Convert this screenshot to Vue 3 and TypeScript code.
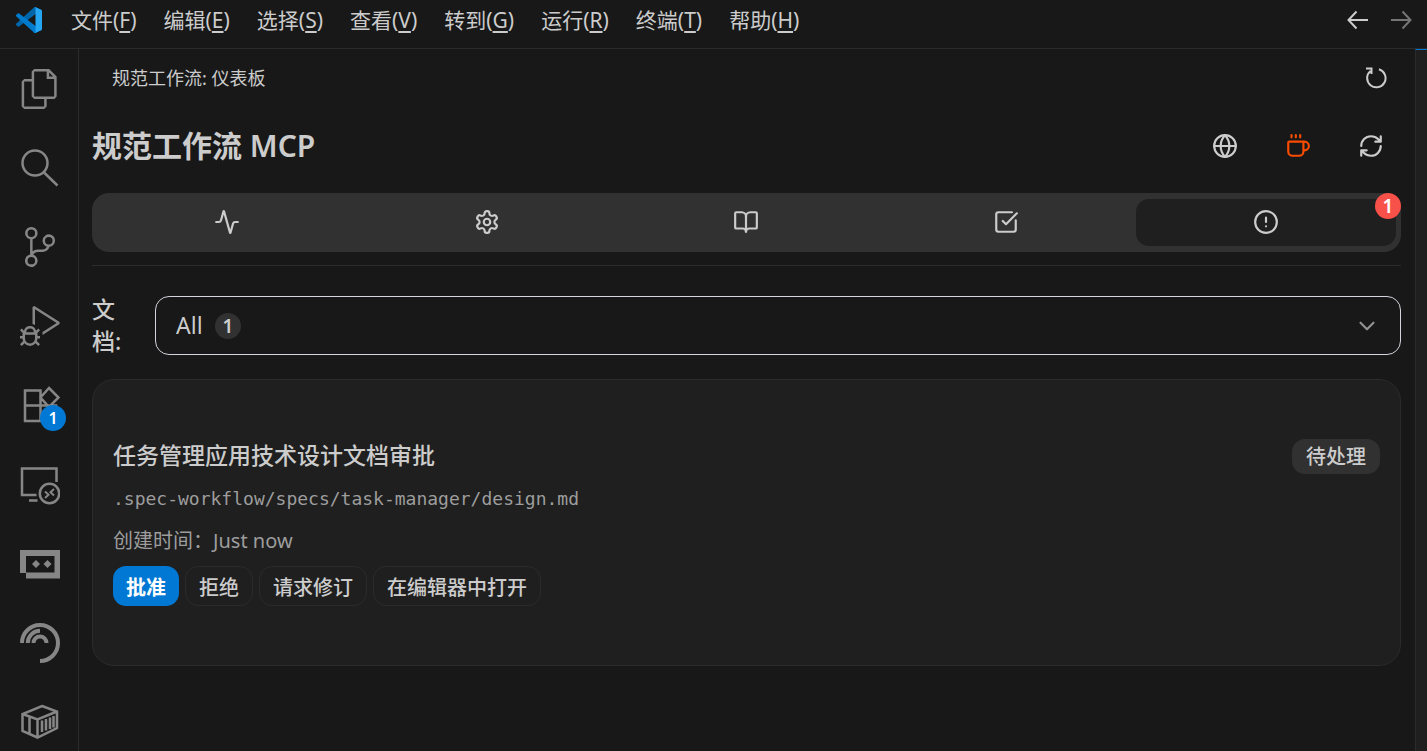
<script setup lang="ts">
import { ref } from 'vue'

interface MenuItem { label: string; key: string }

const menus: MenuItem[] = [
  { label: '文件', key: 'F' },
  { label: '编辑', key: 'E' },
  { label: '选择', key: 'S' },
  { label: '查看', key: 'V' },
  { label: '转到', key: 'G' },
  { label: '运行', key: 'R' },
  { label: '终端', key: 'T' },
  { label: '帮助', key: 'H' },
]

interface Tab { id: string; label: string; paths: string[]; circle?: number; badge?: number }

const tabs: Tab[] = [
  { id: 'overview', label: '概览', paths: ['M22 12h-2.48a2 2 0 0 0-1.93 1.46l-2.35 8.36a.25.25 0 0 1-.48 0L9.24 2.18a.25.25 0 0 0-.48 0l-2.35 8.36A2 2 0 0 1 4.49 12H2'] },
  {
    id: 'steering', label: '指导', circle: 3,
    paths: ['M12.22 2h-.44a2 2 0 0 0-2 2v.18a2 2 0 0 1-1 1.73l-.43.25a2 2 0 0 1-2 0l-.15-.08a2 2 0 0 0-2.73.73l-.22.38a2 2 0 0 0 .73 2.73l.15.1a2 2 0 0 1 1 1.72v.51a2 2 0 0 1-1 1.74l-.15.09a2 2 0 0 0-.73 2.73l.22.38a2 2 0 0 0 2.73.73l.15-.08a2 2 0 0 1 2 0l.43.25a2 2 0 0 1 1 1.73V20a2 2 0 0 0 2 2h.44a2 2 0 0 0 2-2v-.18a2 2 0 0 1 1-1.73l.43-.25a2 2 0 0 1 2 0l.15.08a2 2 0 0 0 2.73-.73l.22-.39a2 2 0 0 0-.73-2.73l-.15-.08a2 2 0 0 1-1-1.74v-.5a2 2 0 0 1 1-1.74l.15-.09a2 2 0 0 0 .73-2.73l-.22-.38a2 2 0 0 0-2.73-.73l-.15.08a2 2 0 0 1-2 0l-.43-.25a2 2 0 0 1-1-1.73V4a2 2 0 0 0-2-2z'],
  },
  { id: 'specs', label: '规范', paths: ['M12 7v14', 'M3 18a1 1 0 0 1-1-1V4a1 1 0 0 1 1-1h5a4 4 0 0 1 4 4 4 4 0 0 1 4-4h5a1 1 0 0 1 1 1v13a1 1 0 0 1-1 1h-6a3 3 0 0 0-3 3 3 3 0 0 0-3-3z'] },
  { id: 'tasks', label: '任务', paths: ['M21 10.5V19a2 2 0 0 1-2 2H5a2 2 0 0 1-2-2V5a2 2 0 0 1 2-2h12.5', 'm9 11 3 3L22 4'] },
  { id: 'approvals', label: '审批', circle: 10, paths: ['M12 8v4', 'M12 16h.01'], badge: 1 },
]

const activeTab = ref('approvals')
const documentFilter = ref('all')
const actions = ['批准', '拒绝', '请求修订', '在编辑器中打开']
</script>

<template>
  <div class="window">
    <header class="titlebar">
      <svg class="logo" viewBox="0 0 100 100" aria-hidden="true">
        <path fill="#0065a9" d="M96.46 10.8 75.86.88a6.25 6.25 0 0 0-7.11 1.2L1.3 63.58a4.17 4.17 0 0 0 0 6.17l5.51 5a4.17 4.17 0 0 0 5.32.24l81.23-61.62A4.14 4.14 0 0 1 100 16.67v-.24a6.25 6.25 0 0 0-3.54-5.63z" />
        <path fill="#007acc" d="M96.46 89.2 75.86 99.12a6.25 6.25 0 0 1-7.11-1.2L1.3 36.42a4.17 4.17 0 0 1 0-6.17l5.51-5a4.17 4.17 0 0 1 5.32-.24l81.23 61.62A4.14 4.14 0 0 0 100 83.33v.24a6.25 6.25 0 0 1-3.54 5.63z" />
        <path fill="#24a6f2" d="M75.86 99.13a6.25 6.25 0 0 1-7.11-1.21C71.06 100.22 75 98.59 75 95.33V4.67c0-3.26-3.94-4.89-6.25-2.59a6.25 6.25 0 0 1 7.11-1.21l20.6 9.91A6.25 6.25 0 0 1 100 16.41v67.18a6.25 6.25 0 0 1-3.54 5.63z" />
      </svg>
      <nav class="menus" aria-label="主菜单">
        <button v-for="menu in menus" :key="menu.key" type="button" class="menu">{{ menu.label }}(<u>{{ menu.key }}</u>)</button>
      </nav>
      <div class="history">
        <button type="button" class="plain" aria-label="后退">
          <svg class="arrow" viewBox="0 0 22 22"><path d="M21 11H1.5M9.5 2.5 1.5 11l8 8.5" /></svg>
        </button>
        <button type="button" class="plain dim" aria-label="前进">
          <svg class="arrow" viewBox="0 0 22 22"><path d="M1 11h19.5M12.5 2.5l8 8.5-8 8.5" /></svg>
        </button>
      </div>
    </header>

    <div class="workbench">
      <nav class="activity" aria-label="活动栏">
        <div class="activity-list">
          <button type="button" class="plain" aria-label="资源管理器">
            <svg class="solid" viewBox="0 0 24 24"><path d="M17.5 0h-9L7 1.5V6H2.5L1 7.5v15.07L2.5 24h12.07L16 22.57V18h4.7l1.3-1.43V4.5L17.5 0zm0 2.12l2.38 2.38H17.5V2.12zm-3 20.38h-12v-15H7v9.07L8.5 18h6v4.5zm6-6h-12v-15H16V6h4.5v10.5z" /></svg>
          </button>
          <button type="button" class="plain" aria-label="搜索">
            <svg class="line" viewBox="0 0 40 40"><circle cx="15" cy="15" r="12.5" /><path d="m24 24.5 13.5 13" /></svg>
          </button>
          <button type="button" class="plain" aria-label="源代码管理">
            <svg class="solid" viewBox="0 0 24 24"><path d="M21.007 8.222A3.738 3.738 0 0 0 15.045 5.2a3.737 3.737 0 0 0 1.156 6.583 2.988 2.988 0 0 1-2.668 1.67h-2.99a4.456 4.456 0 0 0-2.989 1.165V7.4a3.737 3.737 0 1 0-1.494 0v9.117a3.776 3.776 0 1 0 1.816.099 2.99 2.99 0 0 1 2.668-1.667h2.99a4.484 4.484 0 0 0 4.223-3.039 3.736 3.736 0 0 0 3.25-3.687zM4.565 3.738a2.242 2.242 0 1 1 4.484 0 2.242 2.242 0 0 1-4.484 0zm4.484 16.441a2.242 2.242 0 1 1-4.484 0 2.242 2.242 0 0 1 4.484 0zm8.221-9.715a2.242 2.242 0 1 1 0-4.485 2.242 2.242 0 0 1 0 4.485z" /></svg>
          </button>
          <button type="button" class="plain" aria-label="运行和调试">
            <svg class="solid" viewBox="0 0 24 24"><path d="M10.94 13.5l-1.32 1.32a3.73 3.73 0 0 0-7.24 0L1.06 13.5 0 14.56l1.72 1.72-.22.22V18H0v1.5h1.5v.08c.077.489.214.966.41 1.42L0 22.94 1.06 24l1.65-1.65A4.308 4.308 0 0 0 6 24a4.31 4.31 0 0 0 3.29-1.65L10.94 24 12 22.94 10.09 21c.198-.464.336-.951.41-1.45v-.1H12V18h-1.5v-1.5l-.22-.22L12 14.56l-1.06-1.06zM6 13.5a2.25 2.25 0 0 1 2.25 2.25h-4.5A2.25 2.25 0 0 1 6 13.5zm3 6a3.33 3.33 0 0 1-3 3 3.33 3.33 0 0 1-3-3v-2.25h6v2.25zm14.76-9.9v1.26L13.5 17.37V15.6l8.5-5.37L9 2v9.46a5.07 5.07 0 0 0-1.5-.72V.63L8.64 0l15.12 9.6z" /></svg>
          </button>
          <button type="button" class="plain" aria-label="扩展，1 个更新">
            <svg class="line" viewBox="0 0 40 40"><path d="M5 5.5h15.5V36H5zM5 20.5h31V36H20.5M29 3l9.5 9.5L29 22l-8.5-9.5z" /></svg>
            <span class="count">1</span>
          </button>
          <button type="button" class="plain" aria-label="远程资源管理器">
            <svg class="line" viewBox="0 0 40 40"><path d="M36.5 17V3.5H2V30h14.5M9 35.5h8.5" /><circle cx="29.5" cy="28.5" r="9.7" /><path class="fine" d="m25 26.5 3.5 3.3-3.5 3.2M34 24l-3.5 3.2 3.5 3.3" /></svg>
          </button>
          <button type="button" class="plain" aria-label="助手">
            <svg class="solid" viewBox="0 0 40 40"><path fill-rule="evenodd" d="M0 6h40v28.5H6V29H0zm6 6v16.500h28.500V12z" /><path d="m16 16 4 4-4 4-4-4zM27.500 16l4 4-4 4-4-4z" /></svg>
          </button>
          <button type="button" class="plain" aria-label="代码智能">
            <svg class="line thick" viewBox="0 0 40 40"><path d="M2 20A18 18 0 1 1 20 38" /><path d="M7.8 20A12.2 12.2 0 0 1 20 7.8" /><path d="M13.5 20a6.5 6.5 0 0 1 13 0" /></svg>
          </button>
          <button type="button" class="plain" aria-label="容器">
            <svg class="line" viewBox="0 0 40 40"><path d="M22 4 37 9.5v16.5L17.5 35.5 2.5 29V12zM2.5 12l15 5.5L37 9.5M17.5 17.5v18M9.5 15v17M22 18.5v11.5M26 17v11.5M30 15.5V27M33.5 14v11.5" /></svg>
          </button>
        </div>
      </nav>

      <main class="editor">
        <div class="panel-title">
          <span>规范工作流: 仪表板</span>
          <button type="button" class="plain" aria-label="重新加载">
            <svg class="reload" viewBox="0 0 22 22"><path d="M14 2.3A9.2 9.2 0 1 1 5.5 4M1 1.5h5.5V7" /></svg>
          </button>
        </div>

        <div class="content">
          <div class="heading">
            <h1>规范工作流 MCP</h1>
            <div class="tools">
              <button type="button" class="plain" aria-label="语言">
                <svg class="icon" viewBox="0 0 24 24"><circle cx="12" cy="12" r="10" /><path d="M12 2a14.5 14.5 0 0 0 0 20 14.5 14.5 0 0 0 0-20M2 12h20" /></svg>
              </button>
              <button type="button" class="plain coffee" aria-label="支持项目">
                <svg class="icon" viewBox="0 0 24 24"><path d="M6 2v2M10 2v2M14 2v2M16 8a1 1 0 0 1 1 1v8a4 4 0 0 1-4 4H7a4 4 0 0 1-4-4V9a1 1 0 0 1 1-1h14a4 4 0 1 1 0 8h-1" /></svg>
              </button>
              <button type="button" class="plain" aria-label="刷新">
                <svg class="icon" viewBox="0 0 24 24"><path d="M3 12a9 9 0 0 1 9-9 9.75 9.75 0 0 1 6.74 2.74L21 8M21 3v5h-5M21 12a9 9 0 0 1-9 9 9.75 9.75 0 0 1-6.74-2.74L3 16M8 16H3v5" /></svg>
              </button>
            </div>
          </div>

          <div class="tabs" role="tablist">
            <button
              v-for="tab in tabs"
              :key="tab.id"
              type="button"
              role="tab"
              class="tab"
              :class="{ active: tab.id === activeTab }"
              :aria-label="tab.label"
              :aria-selected="tab.id === activeTab"
              @click="activeTab = tab.id"
            >
              <svg class="icon" viewBox="0 0 24 24">
                <path v-for="d in tab.paths" :key="d" :d="d" />
                <circle v-if="tab.circle" cx="12" cy="12" :r="tab.circle" />
              </svg>
              <span v-if="tab.badge" class="alert">{{ tab.badge }}</span>
            </button>
          </div>

          <div class="filter">
            <label for="document-filter">文档:</label>
            <div class="select-box">
              <select id="document-filter" v-model="documentFilter">
                <option value="all">All</option>
              </select>
              <span class="total">1</span>
              <svg class="chevron" viewBox="0 0 24 24" aria-hidden="true"><path d="m6 9 6 6 6-6" /></svg>
            </div>
          </div>

          <article class="card">
            <div class="card-head">
              <h2>任务管理应用技术设计文档审批</h2>
              <span class="status">待处理</span>
            </div>
            <p class="path">.spec-workflow/specs/task-manager/design.md</p>
            <p class="created">创建时间：Just now</p>
            <div class="actions">
              <button v-for="(action, i) in actions" :key="action" type="button" class="action" :class="{ primary: i === 0 }">{{ action }}</button>
            </div>
          </article>
        </div>
      </main>
      <aside class="side" aria-label="辅助栏"></aside>
    </div>
  </div>
</template>

<style>
body {
  background: #181818;
}
</style>

<style scoped>
* {
  box-sizing: border-box;
}

.window {
  display: flex;
  flex-direction: column;
  height: 100vh;
  overflow: hidden;
  background: #181818;
  color: #ccc;
  font-family: "Noto Sans", "Noto Sans CJK SC", sans-serif;
}

button {
  font-family: inherit;
  color: inherit;
  cursor: pointer;
}

h1, h2, p {
  margin: 0;
}

svg {
  display: block;
  flex: none;
}

.plain {
  display: flex;
  align-items: center;
  justify-content: center;
  padding: 0;
  border: 0;
  background: none;
}

.titlebar {
  display: flex;
  flex: none;
  align-items: center;
  height: 49px;
  padding: 0 15px 8px 16px;
  border-bottom: 1px solid #2b2b2b;
}

.logo {
  width: 26px;
  height: 26px;
}

.menus {
  display: flex;
  flex: 1;
  gap: 1px;
  margin-left: 16px;
}

.menu {
  padding: 0 13px;
  border: 0;
  background: none;
  font-size: 21px;
  line-height: 30px;
  white-space: nowrap;
}

.menu u {
  text-underline-offset: 3px;
  text-decoration-thickness: 2px;
}

.history {
  display: flex;
  gap: 21px;
}

.arrow {
  width: 22px;
  height: 22px;
  fill: none;
  stroke: currentColor;
  stroke-width: 2;
}

.dim {
  color: #757575;
}

.workbench {
  display: flex;
  flex: 1;
  min-height: 0;
}

.activity {
  flex: none;
  width: 79px;
  overflow: hidden;
  border-right: 1px solid #2b2b2b;
  color: #868686;
}

.activity-list {
  display: grid;
  grid-auto-rows: 1fr;
  height: 713px;
  padding-left: 2px;
}

.activity-list .plain {
  position: relative;
}

.activity-list svg {
  width: 40px;
  height: 40px;
}

.solid {
  fill: currentColor;
}

.line {
  fill: none;
  stroke: currentColor;
  stroke-width: 2.5;
}

.thick {
  stroke-width: 4;
}

.fine {
  stroke-width: 2;
}

.count {
  position: absolute;
  right: 12px;
  bottom: 14px;
  width: 26px;
  height: 26px;
  border-radius: 13px;
  background: #0078d4;
  color: #fff;
  font-size: 16px;
  font-weight: 600;
  line-height: 26px;
}

.editor {
  flex: 1;
  min-width: 0;
}

.panel-title {
  display: flex;
  align-items: center;
  justify-content: space-between;
  height: 59px;
  padding: 0 28px 2px 33px;
  font-size: 18px;
  line-height: 26px;
}

.reload {
  width: 22px;
  height: 22px;
  fill: none;
  stroke: currentColor;
  stroke-width: 2;
}

.content {
  padding: 8px 14px 0 13px;
}

.heading {
  display: flex;
  align-items: center;
  justify-content: space-between;
  height: 60px;
}

h1 {
  font-size: 30px;
  font-weight: 600;
  line-height: 42px;
}

.tools {
  display: flex;
  gap: 13px;
}

.tools .plain {
  width: 60px;
  height: 52px;
}

.coffee {
  color: #f94c00;
}

.icon {
  width: 26px;
  height: 26px;
  fill: none;
  stroke: currentColor;
  stroke-width: 2;
  stroke-linecap: round;
  stroke-linejoin: round;
}

.tabs {
  display: grid;
  grid-template-columns: repeat(5, 1fr);
  height: 59px;
  margin-top: 17px;
  padding: 6px 5px;
  border-radius: 17px;
  background: #313131;
}

.tab {
  position: relative;
  display: flex;
  align-items: center;
  justify-content: center;
  padding: 0 0 1px;
  border: 0;
  border-radius: 13px;
  background: none;
}

.tab.active {
  background: #1f1f1f;
}

.alert {
  position: absolute;
  top: -6px;
  right: -5px;
  width: 26px;
  height: 26px;
  border-radius: 13px;
  background: #f85149;
  color: #fff;
  font-size: 19px;
  font-weight: 600;
  line-height: 26px;
}

.filter {
  display: flex;
  align-items: center;
  gap: 21px;
  margin-top: 13px;
  padding-top: 27px;
  border-top: 1px solid #2b2b2b;
}

.filter label {
  flex: none;
  width: 42px;
  font-size: 23px;
  font-weight: 500;
  line-height: 32px;
}

.select-box {
  position: relative;
  flex: 1;
}

select {
  display: block;
  width: 100%;
  height: 59px;
  padding: 0 20px;
  appearance: none;
  border: 1px solid #d4d4dc;
  border-radius: 14px;
  background: transparent;
  color: inherit;
  font-family: inherit;
  font-size: 23px;
}

.total {
  position: absolute;
  top: 17px;
  left: 60px;
  width: 26px;
  height: 26px;
  border-radius: 13px;
  background: #313131;
  font-size: 19px;
  font-weight: 600;
  line-height: 26px;
  text-align: center;
  pointer-events: none;
}

.chevron {
  position: absolute;
  top: 17px;
  right: 21px;
  width: 26px;
  height: 26px;
  fill: none;
  stroke: #929292;
  stroke-width: 2;
  stroke-linecap: round;
  stroke-linejoin: round;
  pointer-events: none;
}

.card {
  margin-top: 22px;
  padding: 59px 20px;
  border: 1px solid #2b2b2b;
  border-radius: 22px;
  background: #1f1f1f;
}

.card-head {
  display: flex;
  align-items: flex-start;
  justify-content: space-between;
}

h2 {
  font-size: 23px;
  font-weight: 500;
  line-height: 32px;
}

.status {
  padding: 0 14px;
  border-radius: 13px;
  background: #313131;
  font-size: 20px;
  font-weight: 500;
  line-height: 35px;
}

.path, .created {
  color: #9d9d9d;
  line-height: 26px;
}

.path {
  margin-top: 12px;
  font-family: "DejaVu Sans Mono", monospace;
  font-size: 18px;
}

.created {
  margin-top: 16px;
  font-size: 20px;
}

.actions {
  display: flex;
  gap: 6px;
  margin-top: 12px;
}

.action {
  height: 40px;
  padding: 0 13px;
  border: 1px solid #2b2b2b;
  border-radius: 13px;
  background: transparent;
  font-size: 20px;
  font-weight: 500;
  white-space: nowrap;
}

.action.primary {
  border: 0;
  background: #0078d4;
  color: #fff;
  font-weight: 600;
}

.side {
  flex: none;
  width: 12px;
  border-top: 1px solid #0078d4;
  border-left: 1px solid #2b2b2b;
  background: #1f1f1f;
}
</style>
